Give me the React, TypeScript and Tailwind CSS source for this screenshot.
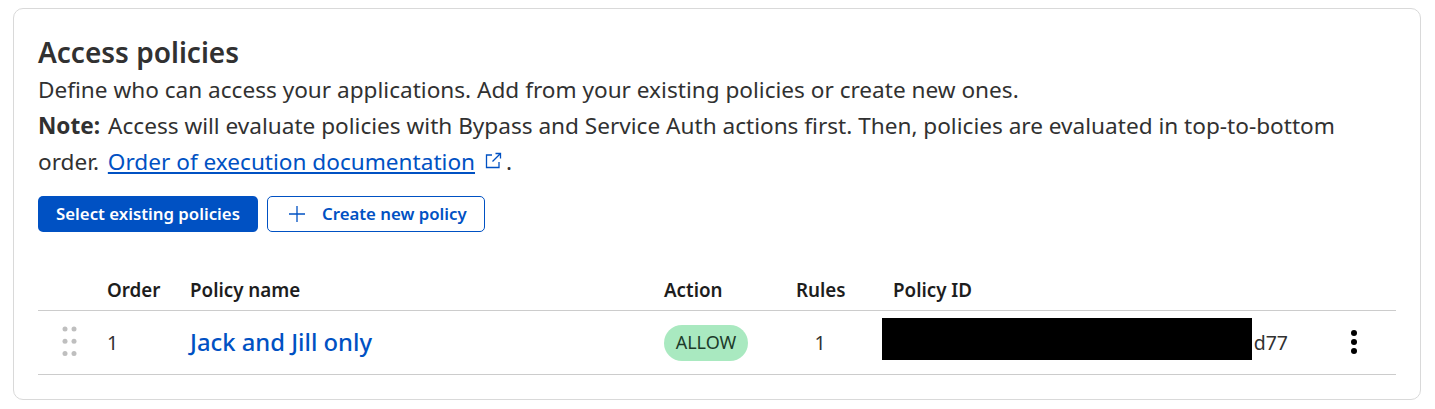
import React from "react";

const App = () => {
  return (
    <div className="w-[1435px] h-[409px] bg-white pt-2 pl-[13px] font-['Noto_Sans',sans-serif]">
      <div className="w-[1408px] h-[392px] border border-[#d9d9d9] rounded-[10px] pl-6 pr-6 pt-[24px] text-[#313131]">
        <h2 className="text-[28px] leading-[39px] font-semibold text-[#313131]">Access policies</h2>
        <p className="text-[22.6px] leading-[36px] mt-0">
          Define who can access your applications. Add from your existing policies or create new ones.
        </p>
        <p className="text-[22.6px] leading-[36px]">
          <strong className="font-bold mr-[2px]">Note:</strong> Access will evaluate policies with Bypass and Service Auth actions first. Then, policies are evaluated in top-to-bottom
          <br />
          order.{" "}
          <a className="text-[#0051c3] underline ml-[3px]">Order of execution documentation</a>
          <svg className="inline-block ml-[10px] mr-[4px] mb-[7px]" width="17" height="17" viewBox="0 0 17 17" fill="none" stroke="#0051c3" strokeWidth="1.3">
            <path d="M7 3H1.5V15.5H14V10" />
            <path d="M7.5 9.5L15.5 1.5M10.5 1.5H15.5V6.5" />
          </svg>
          .
        </p>

        <div className="flex gap-[9px] mt-[16px]">
          <button className="h-[36px] w-[220px] bg-[#0051c3] rounded-[5px] text-white text-[16.8px] font-semibold">Select existing policies</button>
          <button className="h-[36px] w-[218px] pl-[20px] border border-[#0051c3] rounded-[5px] text-[#0051c3] text-[16.8px] font-semibold flex items-center gap-[16px]">
            <svg width="18" height="18" viewBox="0 0 18 18" fill="none" stroke="#0051c3" strokeWidth="1.3">
              <path d="M9 1V17M1 9H17" />
            </svg>
            Create new policy
          </button>
        </div>

        <div className="w-[1358px] mt-[40px] text-[19.5px]">
          <div className="flex h-[39px] items-start border-b border-[#cccccc] font-semibold text-[18.8px] text-[#1d1d1d] leading-[36px]">
            <div className="w-[69px]" />
            <div className="w-[83px]">Order</div>
            <div className="w-[474px]">Policy name</div>
            <div className="w-[132px]">Action</div>
            <div className="w-[97px]">Rules</div>
            <div>Policy ID</div>
          </div>
          <div className="flex h-[64px] items-center border-b border-[#cccccc] text-[#313131]">
            <div className="w-[69px] pl-[24px] mb-[2px]">
              <svg className="block" width="15" height="31" viewBox="0 0 15 31" fill="#bfbfbf">
                <circle cx="3" cy="3" r="2.5" />
                <circle cx="12" cy="3" r="2.5" />
                <circle cx="3" cy="15.3" r="2.5" />
                <circle cx="12" cy="15.3" r="2.5" />
                <circle cx="3" cy="27.5" r="2.5" />
                <circle cx="12" cy="27.5" r="2.5" />
              </svg>
            </div>
            <div className="w-[83px]">1</div>
            <a className="w-[474px] text-[#0051c3] text-[23.8px] font-medium pt-[1px]">Jack and Jill only</a>
            <div className="w-[132px]">
              <span className="inline-flex items-center justify-center w-[84px] h-[36px] rounded-full bg-[#a9e9c0] text-[#1d3b2a] text-[18px]">ALLOW</span>
            </div>
            <div className="w-[48px] mr-[38px] text-center">1</div>
            <div className="flex items-center w-[406px]">
              <div className="w-[370px] h-[42px] bg-black mb-[8px]" />
              <span className="pl-[2px]">d77</span>
            </div>
            <svg className="ml-[62px] mb-[2px]" width="8" height="26" viewBox="0 0 8 26" fill="#000000">
              <circle cx="4" cy="4" r="3" />
              <circle cx="4" cy="13" r="3" />
              <circle cx="4" cy="22" r="3" />
            </svg>
          </div>
        </div>
      </div>
    </div>
  );
};

export default App;
